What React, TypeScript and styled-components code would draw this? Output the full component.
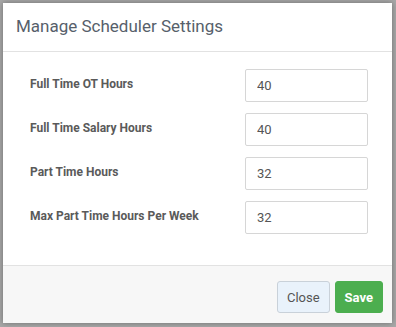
import styled, { createGlobalStyle } from 'styled-components';

const GlobalStyle = createGlobalStyle`
  html, body {
    margin: 0;
    padding: 0;
    background: #a8a8a8;
  }
  body {
    font-family: Roboto, "Liberation Sans", Arial, sans-serif;
  }
  #root {
    padding: 3px 4px 4px 3px;
  }
`;

const Modal = styled.div`
  width: 389px;
  height: 320px;
  background: #fff;
  box-shadow: 0 0 6px rgba(0, 0, 0, 0.35);
  display: flex;
  flex-direction: column;
  box-sizing: border-box;
`;

const Header = styled.div`
  height: 49px;
  box-sizing: border-box;
  display: flex;
  align-items: center;
  padding: 0 13px 3px;
  border-bottom: 1px solid #e2e2e2;
`;

const Title = styled.h3`
  margin: 0;
  font-size: 17px;
  font-weight: 400;
  color: #575f6b;
`;

const Body = styled.div`
  flex: 1;
  padding: 17px 24px 0 27px;
  display: flex;
  flex-direction: column;
  gap: 11px;
`;

const Row = styled.div`
  display: flex;
  align-items: flex-start;
  justify-content: space-between;
`;

const Label = styled.label`
  font-size: 12px;
  font-weight: 700;
  color: #5a5a5a;
  padding-top: 8px;
`;

const Input = styled.input`
  width: 123px;
  height: 33px;
  box-sizing: border-box;
  border: 1px solid #d6d6d6;
  border-radius: 2px;
  padding: 0 11px;
  font-family: Roboto, "Liberation Sans", Arial, sans-serif;
  font-size: 13px;
  color: #555;
  outline: none;
`;

const Footer = styled.div`
  height: 58px;
  box-sizing: border-box;
  background: #f7f7f7;
  border-top: 1px solid #e2e2e2;
  display: flex;
  justify-content: flex-end;
  align-items: flex-start;
  gap: 5px;
  padding: 15px 9px 0 0;
`;

const Button = styled.button<{ $primary?: boolean }>`
  height: 32px;
  box-sizing: border-box;
  border-radius: 3px;
  font-family: Roboto, "Liberation Sans", Arial, sans-serif;
  font-size: 13px;
  padding: 0 9px;
  font-weight: ${({ $primary }) => ($primary ? 700 : 400)};
  color: ${({ $primary }) => ($primary ? '#fff' : '#555')};
  background: ${({ $primary }) => ($primary ? '#4cae4f' : '#e9f2fb')};
  border: 1px solid ${({ $primary }) => ($primary ? '#4cae4f' : '#c9d1d9')};
  cursor: pointer;
`;

const fields = [
  { label: 'Full Time OT Hours', value: '40' },
  { label: 'Full Time Salary Hours', value: '40' },
  { label: 'Part Time Hours', value: '32' },
  { label: 'Max Part Time Hours Per Week', value: '32' },
];

export default function App() {
  return (
    <>
      <GlobalStyle />
      <Modal>
        <Header>
          <Title>Manage Scheduler Settings</Title>
        </Header>
        <Body>
          {fields.map((f) => (
            <Row key={f.label}>
              <Label>{f.label}</Label>
              <Input defaultValue={f.value} />
            </Row>
          ))}
        </Body>
        <Footer>
          <Button>Close</Button>
          <Button $primary>Save</Button>
        </Footer>
      </Modal>
    </>
  );
}
